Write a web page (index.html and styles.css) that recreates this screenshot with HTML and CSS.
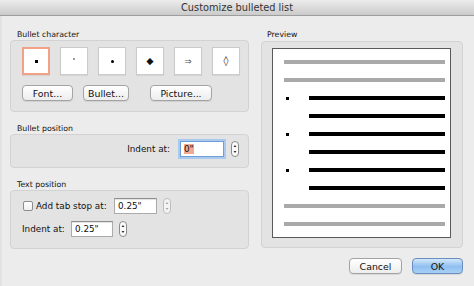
FILE: index.html
```html
<!DOCTYPE html>
<html lang="en">
<head>
  <meta charset="UTF-8" />
  <title>Customize bulleted list</title>
  <link rel="stylesheet" href="styles.css">
</head>
<body>
  <div class="window">
    <div class="titlebar">Customize bulleted list</div>

    <div class="content">
      <!-- Colonne gauche -->
      <div class="left">
        <div class="group-label">Bullet character</div>
        <div class="group bullets-group">
          <div class="bullet-row">
            <div class="cell selected"><span class="dot-square"></span></div>
            <div class="cell"><span class="dot-small"></span></div>
            <div class="cell"><span class="dot-round"></span></div>
            <div class="cell"><span class="glyph diamond">◆</span></div>
            <div class="cell"><span class="glyph arrow">⇒</span></div>
            <div class="cell"><span class="glyph lozenge">◊</span></div>
          </div>
          <div class="btn-row">
            <div class="push btn-font">Font...</div>
            <div class="push btn-bullet">Bullet...</div>
            <div class="push btn-picture">Picture...</div>
          </div>
        </div>

        <div class="group-label spaced">Bullet position</div>
        <div class="group pos-group">
          <span class="ctl-label">Indent at:</span>
          <div class="field focus field-indent"><span class="selection">0"</span></div>
          <svg class="stepper" width="8" height="16" viewBox="0 0 8 16">
            <rect x="0.5" y="0.5" width="7" height="15" rx="3.5" fill="#fafafa" stroke="#8c8c8c"/>
            <path d="M2.5 6 L4 4 L5.5 6 Z" fill="#333"/>
            <path d="M2.5 10 L4 12 L5.5 10 Z" fill="#333"/>
          </svg>
        </div>

        <div class="group-label spaced">Text position</div>
        <div class="group text-group">
          <div class="text-row">
            <span class="checkbox"></span>
            <span class="ctl-label tab-label">Add tab stop at:</span>
            <div class="field field-tab">0.25"</div>
            <svg class="stepper disabled" width="8" height="16" viewBox="0 0 8 16">
              <rect x="0.5" y="0.5" width="7" height="15" rx="3.5" fill="#f4f4f4" stroke="#bdbdbd"/>
              <path d="M2.5 6 L4 4 L5.5 6 Z" fill="#aaa"/>
              <path d="M2.5 10 L4 12 L5.5 10 Z" fill="#aaa"/>
            </svg>
          </div>
          <div class="text-row">
            <span class="ctl-label indent-label">Indent at:</span>
            <div class="field field-text-indent">0.25"</div>
            <svg class="stepper" width="8" height="16" viewBox="0 0 8 16">
              <rect x="0.5" y="0.5" width="7" height="15" rx="3.5" fill="#fafafa" stroke="#8c8c8c"/>
              <path d="M2.5 6 L4 4 L5.5 6 Z" fill="#333"/>
              <path d="M2.5 10 L4 12 L5.5 10 Z" fill="#333"/>
            </svg>
          </div>
        </div>
      </div>

      <!-- Aperçu -->
      <div class="right">
        <div class="group-label preview-label">Preview</div>
        <div class="group preview-group">
          <div class="page">
            <div class="pv-row"><span class="line gray"></span></div>
            <div class="pv-row"><span class="line gray"></span></div>
            <div class="pv-row"><span class="pv-bullet"></span><span class="line black"></span></div>
            <div class="pv-row"><span class="line black indent"></span></div>
            <div class="pv-row"><span class="pv-bullet"></span><span class="line black"></span></div>
            <div class="pv-row"><span class="line black indent"></span></div>
            <div class="pv-row"><span class="pv-bullet"></span><span class="line black"></span></div>
            <div class="pv-row"><span class="line black indent"></span></div>
            <div class="pv-row"><span class="line gray"></span></div>
            <div class="pv-row"><span class="line gray"></span></div>
          </div>
        </div>
      </div>
    </div>

    <div class="footer">
      <div class="push btn-cancel">Cancel</div>
      <div class="push btn-ok">OK</div>
    </div>
  </div>
</body>
</html>
```

FILE: styles.css
```css
body {
  margin: 0;
  background: #ececec;
  font-family: "DejaVu Sans", "Liberation Sans", sans-serif;
  color: #111;
}

.window {
  width: 474px;
  height: 286px;
  overflow: hidden;
  display: flex;
  flex-direction: column;
  box-shadow: inset 2px 0 0 #e2e2e2;
}

.titlebar {
  height: 15px;
  line-height: 15px;
  border-bottom: 1px solid #9d9d9d;
  background: linear-gradient(#ececec, #cbcbcb);
  text-align: center;
  font-size: 9.8px;
  color: #333;
}

.content {
  display: flex;
  gap: 12px;
  padding: 13px 11px 0 10px;
}

.left {
  width: 239px;
}

.right {
  width: 202px;
}

.group-label {
  font-size: 7.8px;
  line-height: 11px;
  padding-left: 7px;
}

.group-label.spaced {
  margin-top: 11px;
}

.preview-label {
  padding-left: 6px;
  line-height: 12px;
}

.group {
  background: #e3e3e3;
  border: 1px solid #d2d2d2;
  border-radius: 4px;
}

/* Bullet character */
.bullets-group {
  padding: 6px 8px 10px 11px;
}

.bullet-row {
  display: flex;
  gap: 10px;
}

.cell {
  width: 28px;
  height: 28px;
  box-sizing: border-box;
  background: #fff;
  border: 1px solid #cbcbcb;
  box-shadow: 0 1px 1px rgba(0, 0, 0, 0.06);
  display: flex;
  align-items: center;
  justify-content: center;
}

.cell.selected {
  border: 2px solid #f2a186;
}

.dot-square {
  width: 3px;
  height: 3px;
  background: #000;
}

.dot-small {
  width: 2px;
  height: 2px;
  border-radius: 50%;
  background: #777;
  margin-bottom: 5px;
}

.dot-round {
  width: 3px;
  height: 3px;
  border-radius: 50%;
  background: #000;
}

.glyph {
  line-height: 1;
}

.diamond {
  font-size: 9.5px;
}

.arrow {
  font-size: 8.5px;
  color: #555;
}

.lozenge {
  font-size: 10px;
  color: #222;
}

.btn-row {
  display: flex;
  margin-top: 10px;
}

.push {
  height: 16px;
  box-sizing: border-box;
  border: 1px solid #a3a3a3;
  border-radius: 4px;
  background: linear-gradient(#ffffff, #ededed);
  box-shadow: 0 1px 0 rgba(0, 0, 0, 0.08);
  font-size: 9.4px;
  color: #111;
  display: flex;
  align-items: center;
  justify-content: center;
}

.btn-font {
  width: 51px;
}

.btn-bullet {
  width: 46px;
  margin-left: 10px;
}

.btn-picture {
  width: 62px;
  margin-left: 21px;
}

/* Champs */
.ctl-label {
  font-size: 8.8px;
}

.field {
  height: 16px;
  box-sizing: border-box;
  border: 1px solid #ababab;
  border-top-color: #8e8e8e;
  background: #fff;
  box-shadow: inset 0 1px 1px rgba(0, 0, 0, 0.12);
  font-size: 8.8px;
  line-height: 14px;
  padding-left: 3px;
}

.field.focus {
  border-color: #6f9fd8;
  box-shadow: 0 0 0 2px #a9c9ef;
}

.selection {
  background: #f4a98f;
}

.stepper {
  display: block;
  flex-shrink: 0;
}

.pos-group {
  display: flex;
  justify-content: flex-end;
  align-items: center;
  padding: 6px 9px 10px;
}

.field-indent {
  width: 44px;
  margin-left: 10px;
}

.pos-group .stepper {
  margin-left: 7px;
}

.text-group {
  padding: 7px 9px 11px 11px;
  display: flex;
  flex-direction: column;
  gap: 7px;
}

.text-row {
  display: flex;
  align-items: center;
}

.checkbox {
  width: 10px;
  height: 10px;
  box-sizing: border-box;
  margin-left: 1px;
  margin-right: 3px;
  border: 1px solid #8d8d8d;
  border-radius: 2px;
  background: linear-gradient(#ffffff, #f0f0f0);
}

.tab-label {
  width: 78px;
}

.field-tab {
  width: 43px;
}

.indent-label {
  width: 49px;
}

.field-text-indent {
  width: 42px;
}

.text-row .stepper {
  margin-left: 6px;
}

/* Aperçu */
.preview-group {
  padding: 6px 11px 9px 10px;
}

.page {
  height: 190px;
  box-sizing: border-box;
  border: 1px solid #5a5a5a;
  background: #fff;
  padding: 11px 5px 0 11px;
  display: flex;
  flex-direction: column;
  gap: 14px;
}

.pv-row {
  height: 4px;
  display: flex;
  align-items: center;
}

.line {
  height: 4px;
  flex: 1;
}

.line.gray {
  background: #a9a9a9;
}

.line.black {
  background: #000;
  margin-left: 20px;
}

.line.black.indent {
  margin-left: 25px;
}

.pv-bullet {
  width: 3px;
  height: 3px;
  background: #000;
  margin-left: 2px;
}

/* Boutons du bas */
.footer {
  display: flex;
  justify-content: flex-end;
  gap: 10px;
  padding: 9px 11px 0;
}

.btn-cancel {
  width: 53px;
}

.btn-ok {
  width: 51px;
  border-color: #6a8ebf;
  background: linear-gradient(#d3e7fb, #8fbff0 55%, #a9d0f6);
}
```
